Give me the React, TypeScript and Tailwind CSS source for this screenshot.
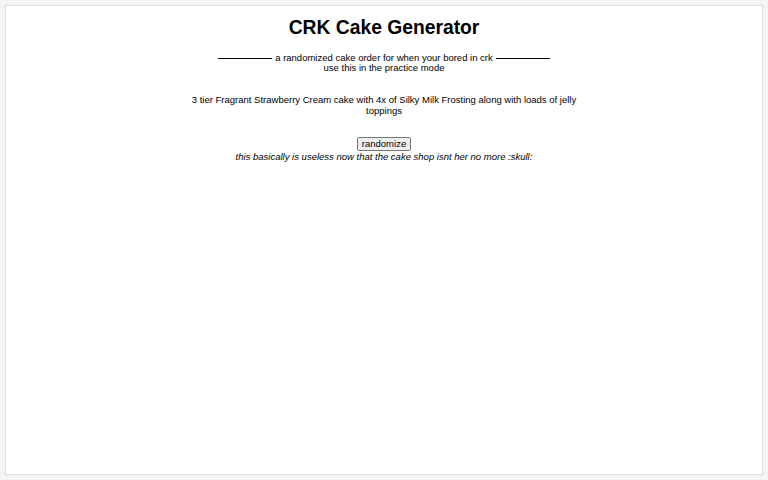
import React, { useState } from 'react';

const tiers = ['1', '2', '3', '4', '5'];
const cakes = ['Fragrant Strawberry Cream', 'Rich Chocolate', 'Sweet Pumpkin', 'Fluffy Vanilla'];
const frostings = ['Silky Milk Frosting', 'Sweet Chocolate Frosting', 'Fresh Lemon Frosting'];
const toppings = ['jelly', 'sprinkles', 'cherries', 'candles'];

const pick = (list: string[]) => list[Math.floor(Math.random() * list.length)];

export default function App() {
  const [order, setOrder] = useState(
    '3 tier Fragrant Strawberry Cream cake with 4x of Silky Milk Frosting along with loads of jelly toppings'
  );

  const randomize = () => {
    const amount = Math.floor(Math.random() * 5) + 1;
    setOrder(
      `${pick(tiers)} tier ${pick(cakes)} cake with ${amount}x of ${pick(frostings)} along with loads of ${pick(toppings)} toppings`
    );
  };

  return (
    <div className="h-[480px] w-[768px] bg-[#f4f4f4] p-[5px] font-['Liberation_Sans',Arial,sans-serif] text-black">
      <div className="flex h-full flex-col items-center border border-[#dedede] bg-white">
        <h1 className="mt-[10px] text-[19.3px] font-bold leading-[24px]">CRK Cake Generator</h1>

        <div className="mt-[13px] flex items-center gap-[3px] text-[9.5px] leading-[10px]">
          <span className="h-px w-[54px] bg-black" />
          <span>a randomized cake order for when your bored in crk</span>
          <span className="h-px w-[54px] bg-black" />
        </div>
        <p className="text-[9.5px] leading-[10px]">use this in the practice mode</p>

        <p className="mt-[21px] w-[392px] text-center text-[9.5px] leading-[11px]">{order}</p>

        <button
          onClick={randomize}
          className="mt-[21px] rounded-[2px] border border-[#767676] bg-[#efefef] px-[4px] py-px text-[9.5px] leading-[10px]"
        >
          randomize
        </button>
        <p className="mt-[1px] text-[9.5px] italic leading-[10px]">
          this basically is useless now that the cake shop isnt her no more :skull:
        </p>
      </div>
    </div>
  );
}
